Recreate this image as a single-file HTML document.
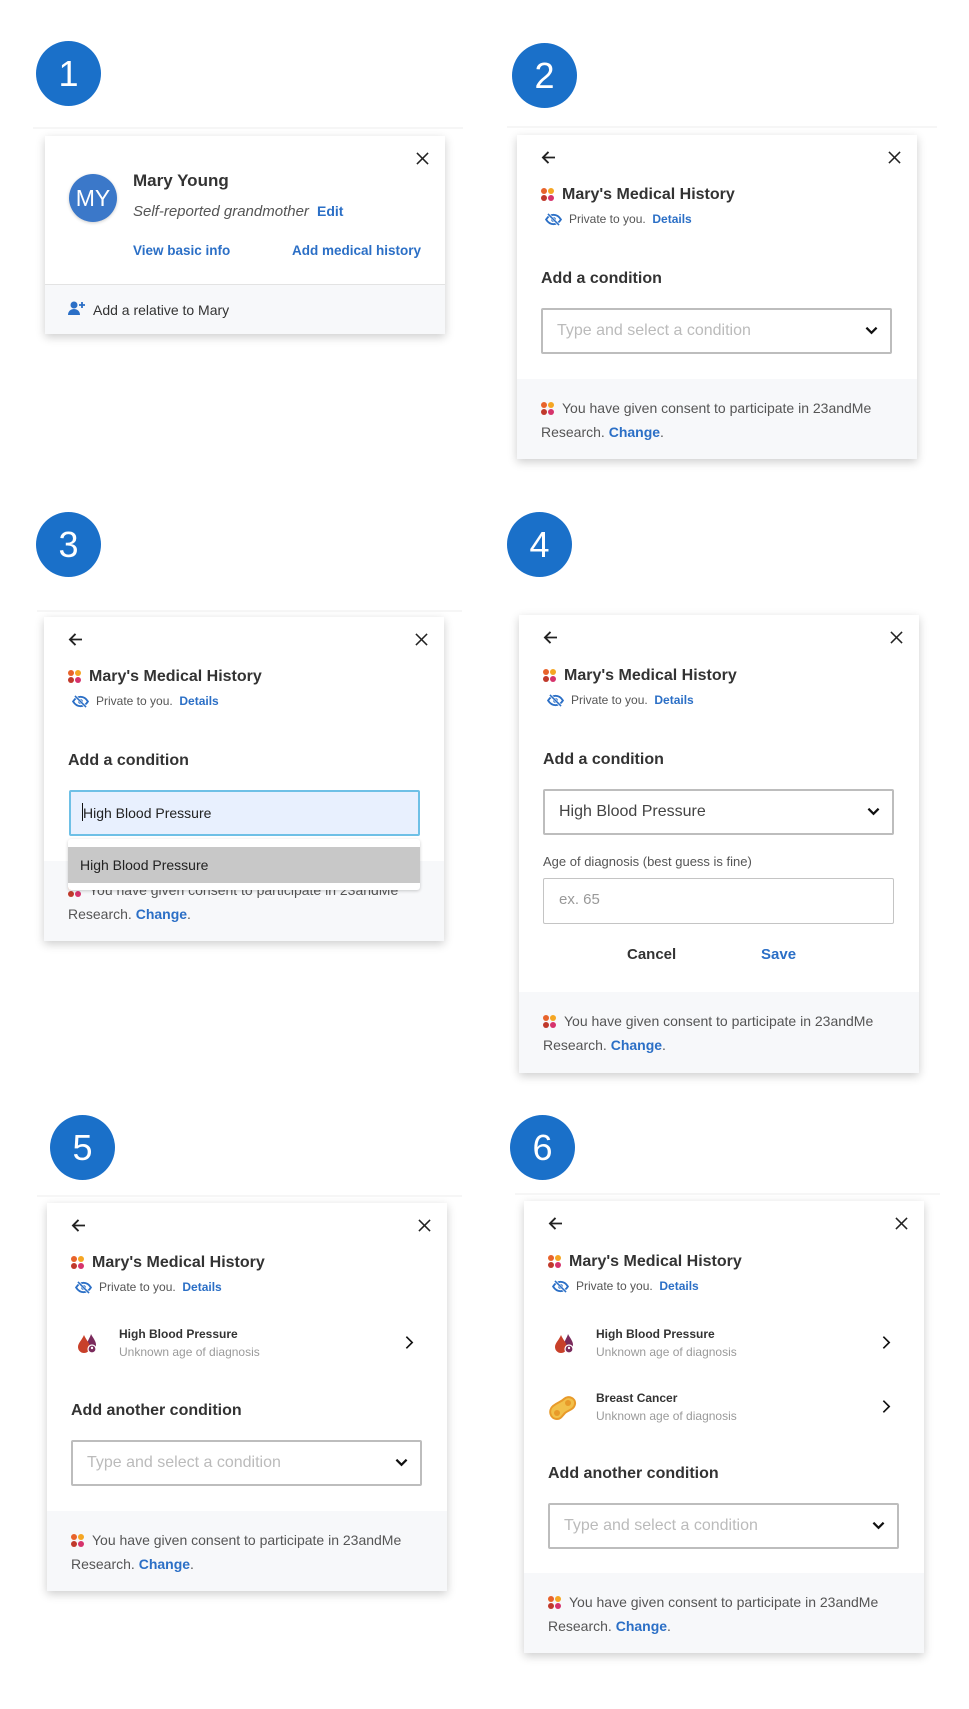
<!DOCTYPE html>
<html><head><meta charset="utf-8">
<style>
*{margin:0;padding:0;box-sizing:border-box}
body{width:969px;height:1709px;background:#fff;position:relative;overflow:hidden;font-family:"Liberation Sans",Arial,sans-serif;color:#333}
.num{position:absolute;width:65px;height:65px;border-radius:50%;background:#1a70c9;color:#fff;font-size:36px;text-align:center;line-height:65px}
.hr{position:absolute;height:2px;background:#f6f6f6}
.card{position:absolute;width:400px;background:#fff;box-shadow:0 3px 9px rgba(0,0,0,.2)}
.a{position:absolute;white-space:nowrap}
.foot{position:absolute;left:0;right:0;bottom:0;background:#f7f8fa}
.title{font-size:16px;font-weight:bold;color:#333;line-height:20px}
.priv{font-size:12px;color:#555;line-height:20px}
.blue{color:#2b6fc6;font-weight:bold}
.h{font-size:16px;font-weight:bold;color:#333;line-height:20px}
.sel{position:absolute;height:46px;border:2px solid #bdbdbd;border-radius:2px;background:#fff}
.ph{position:absolute;left:14px;top:12px;font-size:16px;color:#bbb;white-space:nowrap}
.chev{position:absolute;right:12px;top:16px}
.ft{position:absolute;left:24px;top:17px;width:360px;font-size:14px;line-height:24px;color:#555}
.dots{display:inline-block;width:12px;height:12px;position:relative;vertical-align:-1px;margin-right:9px}
.dots i{position:absolute;width:6px;height:6px;border-radius:50%}
.cn{font-size:12px;font-weight:bold;color:#333;line-height:16px}
.cs{font-size:12px;color:#9a9a9a;line-height:16px}
</style></head><body>

<div class="num" style="left:36px;top:41px">1</div>
<div class="num" style="left:512px;top:43px">2</div>
<div class="num" style="left:36px;top:512px">3</div>
<div class="num" style="left:507px;top:512px">4</div>
<div class="num" style="left:50px;top:1115px">5</div>
<div class="num" style="left:510px;top:1115px">6</div>

<div class="hr" style="left:33px;top:127px;width:430px"></div>
<div class="hr" style="left:507px;top:126px;width:430px"></div>
<div class="hr" style="left:37px;top:610px;width:425px"></div>
<div class="hr" style="left:37px;top:1195px;width:425px"></div>
<div class="hr" style="left:515px;top:1193px;width:425px"></div>

<svg width="0" height="0" style="position:absolute">
<defs>
<symbol id="arrow" viewBox="0 0 16 14"><path d="M15 7H2M8 1L2 7l6 6" fill="none" stroke="#222" stroke-width="2"/></symbol>
<symbol id="close" viewBox="0 0 14 14"><path d="M1 1l12 12M13 1L1 13" fill="none" stroke="#222" stroke-width="1.6"/></symbol>
<symbol id="chev" viewBox="0 0 14 9"><path d="M1.5 1.5l5.5 5.5 5.5-5.5" fill="none" stroke="#111" stroke-width="2.4"/></symbol>
<symbol id="right" viewBox="0 0 10 16"><path d="M1.5 1.5l6.5 6.5-6.5 6.5" fill="none" stroke="#111" stroke-width="1.8"/></symbol>
<symbol id="eye" viewBox="0 0 18 14"><path d="M1 7C3.5 3 6 2 9 2s5.5 1 8 5c-2.5 4-5 5-8 5S3.5 11 1 7z" fill="none" stroke="#2b6fc6" stroke-width="2"/><circle cx="9" cy="7" r="2.6" fill="#2b6fc6"/><path d="M3 1l12 12" stroke="#fff" stroke-width="3"/><path d="M3 1l12 12" stroke="#2b6fc6" stroke-width="1.6"/></symbol>
<symbol id="drop" viewBox="0 0 22 22"><path d="M14 2c2 4 5 7 5 11a4.5 4.5 0 0 1-9 0c0-4 3-7 4-11z" fill="#7a2a5c"/><path d="M7 3c2 5 6 8 6 12a6 6 0 0 1-12 0c0-4 4-7 6-12z" fill="#c8402a"/><circle cx="15" cy="17" r="4" fill="#7a2a5c" stroke="#fff" stroke-width="1.2"/><circle cx="15" cy="16" r="1.2" fill="#fff"/></symbol>
<symbol id="cell" viewBox="0 0 30 28"><path d="M5 12c-5 4-3 13 4 13 4 0 5-3 8-6 3-3 9-3 10-9 1-6-7-9-11-5-3 3-6 3-11 7z" fill="#f2c04a" stroke="#e89a2a" stroke-width="2"/><circle cx="9" cy="19" r="3" fill="#e89a2a"/><circle cx="20" cy="9" r="3" fill="#e89a2a"/></symbol>
</defs></svg>

<!-- CARD 1 -->
<div class="card" style="left:45px;top:136px;height:198px">
  <svg class="a" style="right:16px;top:16px" width="13" height="13"><use href="#close"/></svg>
  <div class="a" style="left:24px;top:38px;width:48px;height:48px;border-radius:50%;background:#3b78c9;color:#fff;font-size:23px;line-height:48px;text-align:center;box-shadow:0 1px 3px rgba(0,0,0,.2)">MY</div>
  <div class="a title" style="left:88px;top:35px;font-size:17px">Mary Young</div>
  <div class="a" style="left:88px;top:65px;font-size:15px;line-height:20px;color:#555;font-style:italic">Self-reported grandmother <span style="font-style:normal;font-size:14px" class="blue">&nbsp;Edit</span></div>
  <div class="a blue" style="left:88px;top:105px;font-size:13.5px;line-height:20px">View basic info</div>
  <div class="a blue" style="left:247px;top:105px;font-size:13.5px;line-height:20px">Add medical history</div>
  <div class="foot" style="height:50px;border-top:1px solid #e3e3e3">
    <svg class="a" style="left:23px;top:16px" width="18" height="14" viewBox="0 0 18 14"><circle cx="6" cy="4" r="3.5" fill="#2b6fc6"/><path d="M0 14c0-4 3-6 6-6s6 2 6 6z" fill="#2b6fc6"/><path d="M14 1v6M11 4h6" stroke="#2b6fc6" stroke-width="1.8"/></svg>
    <div class="a" style="left:48px;top:15px;font-size:14px;line-height:20px;color:#333">Add a relative to Mary</div>
  </div>
</div>

<!-- CARD 2 -->
<div class="card" style="left:517px;top:135px;height:324px">
  <svg class="a" style="left:24px;top:16px" width="15" height="13"><use href="#arrow"/></svg>
  <svg class="a" style="right:16px;top:16px" width="13" height="13"><use href="#close"/></svg>
  <div class="a" style="left:24px;top:50px"><span class="dots"><i style="left:0;top:0;background:#e8632b"></i><i style="left:7px;top:0;background:#f5a623"></i><i style="left:0;top:7px;background:#c0392b"></i><i style="left:7px;top:7px;background:#d6336c"></i></span><span class="title">Mary's Medical History</span></div>
  <svg class="a" style="left:28px;top:78px" width="17" height="13"><use href="#eye"/></svg>
  <div class="a priv" style="left:52px;top:74px">Private to you.&nbsp; <span class="blue">Details</span></div>
  <div class="a h" style="left:24px;top:134px">Add a condition</div>
  <div class="sel" style="left:24px;top:173px;width:351px"><div class="ph">Type and select a condition</div><svg class="chev" width="13" height="9"><use href="#chev"/></svg></div>
  <div class="foot" style="height:80px"><div class="ft"><span class="dots"><i style="left:0;top:0;background:#e8632b"></i><i style="left:7px;top:0;background:#f5a623"></i><i style="left:0;top:7px;background:#c0392b"></i><i style="left:7px;top:7px;background:#d6336c"></i></span>You have given consent to participate in 23andMe Research. <span class="blue">Change</span>.</div></div>
</div>

<!-- CARD 3 -->
<div class="card" style="left:44px;top:617px;height:324px">
  <svg class="a" style="left:24px;top:16px" width="15" height="13"><use href="#arrow"/></svg>
  <svg class="a" style="right:16px;top:16px" width="13" height="13"><use href="#close"/></svg>
  <div class="a" style="left:24px;top:50px"><span class="dots"><i style="left:0;top:0;background:#e8632b"></i><i style="left:7px;top:0;background:#f5a623"></i><i style="left:0;top:7px;background:#c0392b"></i><i style="left:7px;top:7px;background:#d6336c"></i></span><span class="title">Mary's Medical History</span></div>
  <svg class="a" style="left:28px;top:78px" width="17" height="13"><use href="#eye"/></svg>
  <div class="a priv" style="left:52px;top:74px">Private to you.&nbsp; <span class="blue">Details</span></div>
  <div class="a h" style="left:24px;top:134px">Add a condition</div>
  <div class="foot" style="height:80px"><div class="ft"><span class="dots"><i style="left:0;top:0;background:#e8632b"></i><i style="left:7px;top:0;background:#f5a623"></i><i style="left:0;top:7px;background:#c0392b"></i><i style="left:7px;top:7px;background:#d6336c"></i></span>You have given consent to participate in 23andMe Research. <span class="blue">Change</span>.</div></div>
  <div class="a" style="left:25px;top:173px;width:351px;height:46px;border:2px solid #6ec0e6;border-radius:2px;background:#e8f0fe"></div>
  <div class="a" style="left:38px;top:186px;width:1px;height:18px;background:#111"></div>
  <div class="a" style="left:39px;top:186px;font-size:14px;line-height:20px;color:#222">High Blood Pressure</div>
  <div class="a" style="left:24px;top:222px;width:352px;height:51px;background:#fff;box-shadow:0 1px 3px rgba(0,0,0,.2);border-radius:3px">
    <div style="position:absolute;left:0;right:0;top:8px;height:36px;background:#c8c8c8"></div>
    <div class="a" style="left:12px;top:16px;font-size:14px;line-height:20px;color:#222">High Blood Pressure</div>
  </div>
</div>

<!-- CARD 4 -->
<div class="card" style="left:519px;top:615px;height:458px">
  <svg class="a" style="left:24px;top:16px" width="15" height="13"><use href="#arrow"/></svg>
  <svg class="a" style="right:16px;top:16px" width="13" height="13"><use href="#close"/></svg>
  <div class="a" style="left:24px;top:51px"><span class="dots"><i style="left:0;top:0;background:#e8632b"></i><i style="left:7px;top:0;background:#f5a623"></i><i style="left:0;top:7px;background:#c0392b"></i><i style="left:7px;top:7px;background:#d6336c"></i></span><span class="title">Mary's Medical History</span></div>
  <svg class="a" style="left:28px;top:79px" width="17" height="13"><use href="#eye"/></svg>
  <div class="a priv" style="left:52px;top:75px">Private to you.&nbsp; <span class="blue">Details</span></div>
  <div class="a h" style="left:24px;top:135px">Add a condition</div>
  <div class="sel" style="left:24px;top:174px;width:351px"><div class="ph" style="color:#444">High Blood Pressure</div><svg class="chev" width="13" height="9"><use href="#chev"/></svg></div>
  <div class="a" style="left:24px;top:238px;font-size:13px;line-height:18px;color:#555">Age of diagnosis (best guess is fine)</div>
  <div class="a" style="left:24px;top:263px;width:351px;height:46px;border:1px solid #c4c4c4;border-radius:2px"><div class="ph" style="top:12px;left:15px;font-size:15px;color:#999">ex. 65</div></div>
  <div class="a" style="left:108px;top:330px;font-size:15px;font-weight:bold;line-height:20px;color:#333">Cancel</div>
  <div class="a blue" style="left:242px;top:330px;font-size:15px;line-height:20px">Save</div>
  <div class="foot" style="height:81px"><div class="ft"><span class="dots"><i style="left:0;top:0;background:#e8632b"></i><i style="left:7px;top:0;background:#f5a623"></i><i style="left:0;top:7px;background:#c0392b"></i><i style="left:7px;top:7px;background:#d6336c"></i></span>You have given consent to participate in 23andMe Research. <span class="blue">Change</span>.</div></div>
</div>

<!-- CARD 5 -->
<div class="card" style="left:47px;top:1203px;height:388px">
  <svg class="a" style="left:24px;top:16px" width="15" height="13"><use href="#arrow"/></svg>
  <svg class="a" style="right:16px;top:16px" width="13" height="13"><use href="#close"/></svg>
  <div class="a" style="left:24px;top:50px"><span class="dots"><i style="left:0;top:0;background:#e8632b"></i><i style="left:7px;top:0;background:#f5a623"></i><i style="left:0;top:7px;background:#c0392b"></i><i style="left:7px;top:7px;background:#d6336c"></i></span><span class="title">Mary's Medical History</span></div>
  <svg class="a" style="left:28px;top:78px" width="17" height="13"><use href="#eye"/></svg>
  <div class="a priv" style="left:52px;top:74px">Private to you.&nbsp; <span class="blue">Details</span></div>
  <svg class="a" style="left:30px;top:129px" width="22" height="22"><use href="#drop"/></svg>
  <div class="a cn" style="left:72px;top:123px">High Blood Pressure</div>
  <div class="a cs" style="left:72px;top:141px">Unknown age of diagnosis</div>
  <svg class="a" style="left:358px;top:132px" width="9" height="15"><use href="#right"/></svg>
  <div class="a h" style="left:24px;top:198px">Add another condition</div>
  <div class="sel" style="left:24px;top:237px;width:351px"><div class="ph">Type and select a condition</div><svg class="chev" width="13" height="9"><use href="#chev"/></svg></div>
  <div class="foot" style="height:80px"><div class="ft"><span class="dots"><i style="left:0;top:0;background:#e8632b"></i><i style="left:7px;top:0;background:#f5a623"></i><i style="left:0;top:7px;background:#c0392b"></i><i style="left:7px;top:7px;background:#d6336c"></i></span>You have given consent to participate in 23andMe Research. <span class="blue">Change</span>.</div></div>
</div>

<!-- CARD 6 -->
<div class="card" style="left:524px;top:1201px;height:452px">
  <svg class="a" style="left:24px;top:16px" width="15" height="13"><use href="#arrow"/></svg>
  <svg class="a" style="right:16px;top:16px" width="13" height="13"><use href="#close"/></svg>
  <div class="a" style="left:24px;top:51px"><span class="dots"><i style="left:0;top:0;background:#e8632b"></i><i style="left:7px;top:0;background:#f5a623"></i><i style="left:0;top:7px;background:#c0392b"></i><i style="left:7px;top:7px;background:#d6336c"></i></span><span class="title">Mary's Medical History</span></div>
  <svg class="a" style="left:28px;top:79px" width="17" height="13"><use href="#eye"/></svg>
  <div class="a priv" style="left:52px;top:75px">Private to you.&nbsp; <span class="blue">Details</span></div>
  <svg class="a" style="left:30px;top:131px" width="22" height="22"><use href="#drop"/></svg>
  <div class="a cn" style="left:72px;top:125px">High Blood Pressure</div>
  <div class="a cs" style="left:72px;top:143px">Unknown age of diagnosis</div>
  <svg class="a" style="left:358px;top:134px" width="9" height="15"><use href="#right"/></svg>
  <svg class="a" style="left:24px;top:193px" width="30" height="28"><use href="#cell"/></svg>
  <div class="a cn" style="left:72px;top:189px">Breast Cancer</div>
  <div class="a cs" style="left:72px;top:207px">Unknown age of diagnosis</div>
  <svg class="a" style="left:358px;top:198px" width="9" height="15"><use href="#right"/></svg>
  <div class="a h" style="left:24px;top:263px">Add another condition</div>
  <div class="sel" style="left:24px;top:302px;width:351px"><div class="ph">Type and select a condition</div><svg class="chev" width="13" height="9"><use href="#chev"/></svg></div>
  <div class="foot" style="height:80px"><div class="ft"><span class="dots"><i style="left:0;top:0;background:#e8632b"></i><i style="left:7px;top:0;background:#f5a623"></i><i style="left:0;top:7px;background:#c0392b"></i><i style="left:7px;top:7px;background:#d6336c"></i></span>You have given consent to participate in 23andMe Research. <span class="blue">Change</span>.</div></div>
</div>

</body></html>
